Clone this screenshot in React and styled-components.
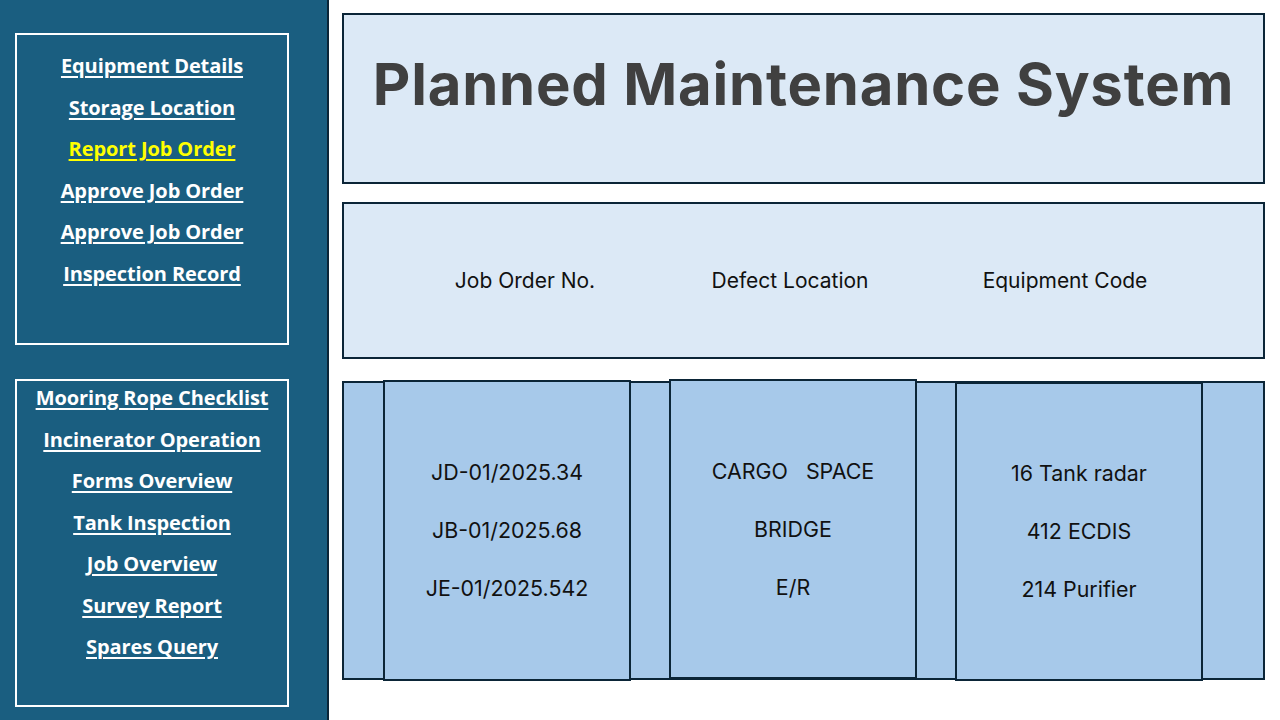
import styled, { createGlobalStyle } from "styled-components";

const GlobalStyle = createGlobalStyle`
  html, body {
    margin: 0;
    padding: 0;
    background: #ffffff;
  }
  * {
    box-sizing: border-box;
  }
`;

const Page = styled.div`
  width: 1280px;
  height: 720px;
  display: flex;
  background: #ffffff;
  overflow: hidden;
`;

const Sidebar = styled.div`
  width: 329px;
  height: 720px;
  background: #1a5e80;
  border-right: 2px solid #0b2537;
  padding: 33px 0 0 15px;
  display: flex;
  flex-direction: column;
  gap: 34px;
`;

const NavBox = styled.div`
  width: 274px;
  height: ${(p) => p.h}px;
  border: 2px solid #ffffff;
  padding-top: ${(p) => p.pt}px;
  display: flex;
  flex-direction: column;
  align-items: center;
  gap: 17.5px;
`;

const NavLink = styled.a`
  font-family: "Open Sans", "Liberation Sans", sans-serif;
  font-weight: 700;
  font-size: 20px;
  line-height: 24px;
  letter-spacing: -0.1px;
  color: ${(p) => (p.active ? "#ffff00" : "#ffffff")};
  text-decoration: underline;
  text-decoration-thickness: 2px;
  text-underline-offset: 3px;
  white-space: nowrap;
  cursor: pointer;
`;

const Main = styled.div`
  flex: 1;
  padding: 13px 15px 0 13px;
  display: flex;
  flex-direction: column;
`;

const TitleBox = styled.div`
  height: 171px;
  background: #dce9f6;
  border: 2px solid #0b2537;
  padding-top: 36px;
  display: flex;
  justify-content: center;
`;

const Title = styled.h1`
  margin: 0;
  font-family: Inter, "Open Sans", sans-serif;
  font-weight: 700;
  font-size: 58px;
  line-height: 66px;
  letter-spacing: 0.8px;
  color: #404040;
  white-space: nowrap;
`;

const HeadBox = styled.div`
  height: 157px;
  margin-top: 18px;
  background: #dce9f6;
  border: 2px solid #0b2537;
  display: flex;
  align-items: center;
  padding-left: 39px;
  gap: 38px;
`;

const HeadCell = styled.div`
  width: 248px;
  text-align: center;
  font-family: Inter, "Liberation Sans", sans-serif;
  font-size: 21px;
  color: #111111;
  transform: translateX(${(p) => p.shift || 0}px);
  white-space: nowrap;
`;

const DataBox = styled.div`
  height: 299px;
  margin-top: 22px;
  background: #a7c9ea;
  border: 2px solid #0b2537;
  display: flex;
  padding-left: 39px;
  gap: 38px;
`;

const DataColumn = styled.div`
  width: 248px;
  margin: ${(p) => p.m || "-3px 0 -3px"};
  border: 2px solid #0b2537;
  background: #a7c9ea;
  display: flex;
  flex-direction: column;
  justify-content: center;
  align-items: center;
  gap: 33px;
`;

const DataText = styled.div`
  font-family: Inter, "Liberation Sans", sans-serif;
  font-size: 21.4px;
  line-height: 25px;
  color: #111111;
  white-space: pre;
`;

const topLinks = [
  "Equipment Details",
  "Storage Location",
  "Report Job Order",
  "Approve Job Order",
  "Approve Job Order",
  "Inspection Record",
];

const bottomLinks = [
  "Mooring Rope Checklist",
  "Incinerator Operation",
  "Forms Overview",
  "Tank Inspection",
  "Job Overview",
  "Survey Report",
  "Spares Query",
];

const columns = [
  { m: "-3px 0 -3px", items: ["JD-01/2025.34", "JB-01/2025.68", "JE-01/2025.542"] },
  { m: "-4px 0 -1px", items: ["CARGO   SPACE", "BRIDGE", "E/R"] },
  { m: "-1px 0 -3px", items: ["16 Tank radar", "412 ECDIS", "214 Purifier"] },
];

const App = () => {
  return (
    <>
      <GlobalStyle />
      <Page>
        <Sidebar>
          <NavBox h={312} pt={19}>
            {topLinks.map((label, i) => (
              <NavLink key={i} active={label === "Report Job Order"}>
                {label}
              </NavLink>
            ))}
          </NavBox>
          <NavBox h={328} pt={5}>
            {bottomLinks.map((label) => (
              <NavLink key={label}>{label}</NavLink>
            ))}
          </NavBox>
        </Sidebar>
        <Main>
          <TitleBox>
            <Title>Planned Maintenance System</Title>
          </TitleBox>
          <HeadBox>
            <HeadCell shift={18}>Job Order No.</HeadCell>
            <HeadCell shift={-3}>Defect Location</HeadCell>
            <HeadCell shift={-14}>Equipment Code</HeadCell>
          </HeadBox>
          <DataBox>
            {columns.map((col, i) => (
              <DataColumn key={i} m={col.m}>
                {col.items.map((t) => (
                  <DataText key={t}>{t}</DataText>
                ))}
              </DataColumn>
            ))}
          </DataBox>
        </Main>
      </Page>
    </>
  );
};

export default App;
